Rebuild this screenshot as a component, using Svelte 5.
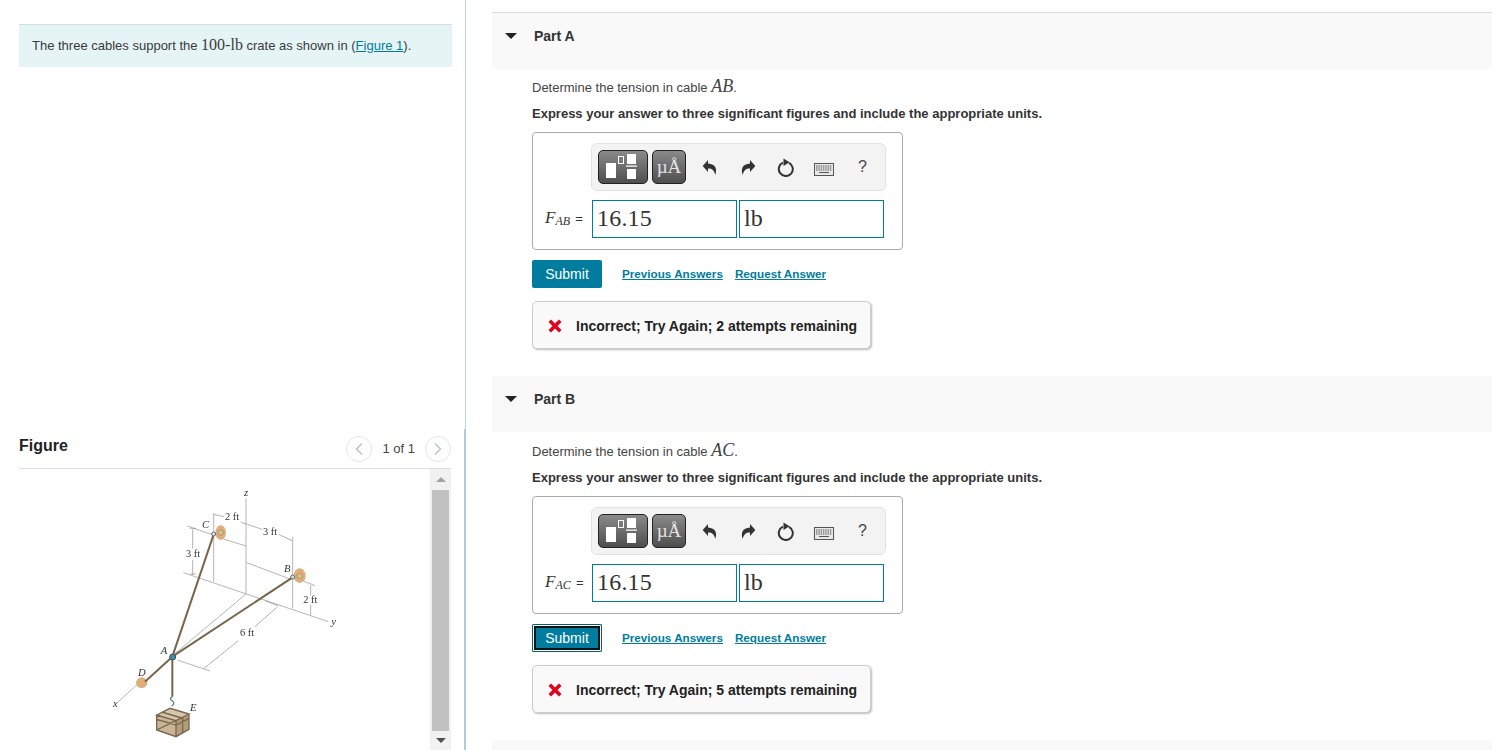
<script>
	const parts = [
		{ name: 'Part A', cable: 'AB', sub: 'AB', attempts: 2, focused: false },
		{ name: 'Part B', cable: 'AC', sub: 'AC', attempts: 5, focused: true }
	];
</script>

<div class="page">
	<div class="left">
		<div class="intro-wrap">
			<div class="intro">
				The three cables support the <span class="serif">100-lb</span> crate as shown in (<a href="#fig">Figure 1</a>).
			</div>
		</div>

		<div class="figure-wrap">
			<div class="figure-head">
				<h2>Figure</h2>
				<div class="pager">
					<span class="circle">
						<svg width="10" height="14" viewBox="0 0 10 14"><path d="M8 1.500 2.500 7 8 12.500" /></svg>
					</span>
					<span class="count">1 of 1</span>
					<span class="circle">
						<svg width="10" height="14" viewBox="0 0 10 14"><path d="M2 1.500 7.500 7 2 12.500" /></svg>
					</span>
				</div>
			</div>
			<div class="figure-body">
				<div class="figure-pic">
					<svg class="diagram" width="270" height="270" viewBox="0 0 810 810">
						<g class="thin">
							<path d="M468 55V340" />
							<path d="M280 278 715 425" />
							<path d="M468 342 250 525" />
							<path d="M85 665 140 615" />
							<path d="M292 138 370 165M400 177 468 198" />
							<path d="M371 100V305" />
							<path d="M470 248 600 297" />
							<path d="M608 170V385" />
							<path d="M640 303 675 317" />
							<path d="M262 540 360 573" />
							<path d="M525 362 565 378" />
						</g>
						<g class="dim">
							<path d="M308 148V205M308 240V285" />
							<path d="M300 282H318M300 145H318" />
							<path d="M371 103 402 110M452 126 468 132" />
							<path d="M470 132 516 148M566 163 606 182" />
							<path d="M662 316V345M662 375V405" />
							<path d="M342 565 445 482M495 440 560 382" />
						</g>
						<g class="mount">
							<ellipse cx="392" cy="158" rx="16" ry="22" />
							<ellipse cx="629" cy="287" rx="18" ry="22" />
							<ellipse cx="155" cy="608" rx="17" ry="16" />
						</g>
						<g class="mount-in">
							<circle cx="392" cy="158" r="8" />
							<circle cx="629" cy="288" r="8" />
						</g>
						<g class="cable">
							<path d="M247 530 371 163" />
							<path d="M247 530 608 292" />
							<path d="M247 530 165 605" />
							<path d="M247 530V650" />
						</g>
						<circle class="ring" cx="371" cy="162" r="6" />
						<circle class="ring" cx="608" cy="291" r="6" />
						<circle class="knot" cx="248" cy="531" r="9" />
						<path class="hook" d="M247 650c-8 4-6 10 0 13s6 10-2 16" />
						<g class="crate">
							<path class="side" d="M200 705 258 722V770L200 750Z" />
							<path class="side dark" d="M258 722 297 702V748L258 770Z" />
							<path class="side light" d="M200 705 240 685 297 702 258 722Z" />
							<path class="frame" d="M200 705 258 722 297 702 240 685ZM200 705V750L258 770 297 748V702M258 722V770M200 718 258 735 297 715M200 750 258 722M278 712V758M215 696 275 714" />
						</g>
						<g class="dim-label">
							<text x="405" y="121">2 ft</text>
							<text x="519" y="165">3 ft</text>
							<text x="288" y="232">3 ft</text>
							<text x="640" y="369">2 ft</text>
							<text x="450" y="468">6 ft</text>
						</g>
						<g class="point-label">
							<text x="462" y="49">z</text>
							<text x="336" y="144">C</text>
							<text x="582" y="277">B</text>
							<text x="212" y="522">A</text>
							<text x="144" y="587">D</text>
							<text x="300" y="692">E</text>
							<text x="69" y="680">x</text>
							<text x="724" y="434">y</text>
						</g>
					</svg>
				</div>
				<div class="scrollbar">
					<div class="arrow"><span class="up"></span></div>
					<div class="thumb"></div>
					<div class="arrow bottom"><span class="down"></span></div>
				</div>
			</div>
		</div>
	</div>

	<div class="right">
		{#each parts as part, i}
			<section class="part">
				<div class="part-head" class:first={i === 0}>
					<span class="caret"></span>
					<h3>{part.name}</h3>
				</div>
				<p class="question">Determine the tension in cable <span class="math">{part.cable}</span>.</p>
				<p class="express">Express your answer to three significant figures and include the appropriate units.</p>

				<div class="answer">
					<div class="toolbar">
						<button class="tool template" aria-label="Templates">
							<svg width="48" height="32" viewBox="0 0 48 32">
								<path class="white" d="M7 12h10v15H7zM28 3h9v10h-9zM27 14.500h11v1.200H27zM28 18h9v10h-9z" />
								<rect class="hollow" x="19.500" y="5.500" width="5" height="7" />
							</svg>
						</button>
						<button class="tool units">µÅ</button>
						<svg class="icon undo" width="16" height="17" viewBox="0 0 16 17">
							<path d="M6 1 .7 7 6 13V9.500c3.700-.2 6 1.500 7.300 6.500 2-6 .5-11-7.300-11.500z" />
						</svg>
						<svg class="icon redo" width="16" height="17" viewBox="0 0 16 17">
							<path d="M10 1l5.300 6L10 13V9.500c-3.700-.2-6 1.500-7.300 6.500-2-6-.5-11 7.300-11.500z" />
						</svg>
						<svg class="icon reset" width="18" height="19" viewBox="0 0 18 19">
							<path class="ring-line" d="M12 4.800A7 7 0 1 1 6 4.600" />
							<path d="M6.500.5 12.500 4.300 6.500 8z" />
						</svg>
						<svg class="icon keys" width="20" height="13" viewBox="0 0 20 13">
							<rect x=".5" y=".5" width="19" height="12" />
							<path d="M2 3h16M2 5h16M2 7h16" stroke-dasharray="1.500 .8" />
							<path d="M5 9.500h10" />
						</svg>
						<span class="help">?</span>
					</div>

					<div class="entry">
						<span class="label"><i>F</i><i class="sub">{part.sub}</i> <span class="eq">=</span></span>
						<input class="field" value="16.15" />
						<input class="field" value="lb" />
					</div>
				</div>

				<div class="actions">
					<button class="submit" class:focused={part.focused}>Submit</button>
					<a href="#prev">Previous Answers</a>
					<a href="#req">Request Answer</a>
				</div>

				<div class="feedback">
					<svg width="14" height="14" viewBox="0 0 14 14">
						<path d="M3 .5 7 4.500 11 .5 13.500 3 9.500 7 13.500 11 11 13.500 7 9.500 3 13.500 .5 11 4.500 7 .5 3z" />
					</svg>
					<span>Incorrect; Try Again; {part.attempts} attempts remaining</span>
				</div>
			</section>
		{/each}
		<div class="part-head next"></div>
	</div>
</div>

<style>
	:global(body) {
		margin: 0;
		overflow: hidden;
		background: #fff;
	}

	.page {
		display: flex;
		height: 750px;
		overflow: hidden;
		font-family: 'Liberation Sans', Arial, sans-serif;
		font-size: 13px;
		color: #333;
	}

	.left {
		width: 467px;
		flex: none;
	}

	.intro-wrap {
		height: 429px;
		box-sizing: border-box;
		padding: 24px 13px 0 19px;
		width: 466px;
		border-right: 1px solid #c3d2e0;
	}

	.intro {
		height: 43px;
		box-sizing: border-box;
		padding-left: 13px;
		border-top: 1px solid #d5dfe3;
		background: #e5f5f6;
		font-size: 13px;
		line-height: 39px;
		color: #3a3a3a;
	}

	.serif {
		font-family: 'Liberation Serif', serif;
		font-size: 16px;
	}

	a {
		color: #007c9e;
		text-decoration: underline;
	}

	.figure-wrap {
		height: 321px;
		width: 466px;
		box-sizing: border-box;
		padding-left: 19px;
		border-right: 2px solid #b5c9dd;
	}

	.figure-head {
		display: flex;
		align-items: center;
		justify-content: space-between;
		width: 432px;
		height: 39px;
		border-bottom: 1px solid #ddd;
	}

	h2 {
		margin: 0 0 6px;
		font-size: 16px;
		font-weight: 700;
		color: #222;
	}

	.pager {
		display: flex;
		align-items: center;
	}

	.circle {
		display: flex;
		align-items: center;
		justify-content: center;
		width: 24px;
		height: 24px;
		border: 1px solid #e6e6e6;
		border-radius: 50%;
	}

	.circle path {
		fill: none;
		stroke: #b9c4cc;
		stroke-width: 1.500;
	}

	.count {
		margin: 0 10px;
		font-size: 13px;
		color: #444;
	}

	.figure-body {
		display: flex;
		width: 432px;
		height: 281px;
	}

	.figure-pic {
		flex: 1;
		padding: 11px 0 0 71px;
		overflow: hidden;
	}

	.diagram {
		display: block;
		filter: blur(0.3px);
	}

	.thin path {
		fill: none;
		stroke: #8f8f8f;
		stroke-width: 2;
	}

	.dim path {
		fill: none;
		stroke: #666;
		stroke-width: 1.500;
	}

	.mount {
		fill: #dfae7e;
	}

	.mount-in {
		fill: #d8c58c;
		stroke: #9a7f4c;
		stroke-width: 2;
	}

	.cable path {
		fill: none;
		stroke: #77664c;
		stroke-width: 6;
	}

	.ring {
		fill: #dfe5e5;
		stroke: #5f6a6a;
		stroke-width: 3;
	}

	.knot {
		fill: #3f8fb5;
		stroke: #3d4f55;
		stroke-width: 3;
	}

	.hook {
		fill: none;
		stroke: #5f7c7c;
		stroke-width: 4;
	}

	.side {
		fill: #c9b596;
	}

	.side.dark {
		fill: #b39d7c;
	}

	.side.light {
		fill: #d6c6ac;
	}

	.frame {
		fill: none;
		stroke: #7a674c;
		stroke-width: 4;
	}

	.dim-label text {
		font-family: 'Liberation Serif', serif;
		font-size: 31px;
		fill: #333;
	}

	.point-label text {
		font-family: 'Liberation Serif', serif;
		font-style: italic;
		font-size: 32px;
		fill: #333;
	}

	.scrollbar {
		display: flex;
		flex-direction: column;
		width: 21px;
		flex: none;
		background: #f1f1f1;
	}

	.arrow {
		display: flex;
		align-items: center;
		justify-content: center;
		height: 21px;
		flex: none;
	}

	.arrow.bottom {
		height: 19px;
	}

	.thumb {
		flex: 1;
		margin: 0 2px;
		background: #c1c1c1;
	}

	.up {
		border: 5px solid transparent;
		border-top: 0;
		border-bottom: 5px solid #a3a3a3;
	}

	.down {
		border: 5px solid transparent;
		border-bottom: 0;
		border-top: 5px solid #505050;
	}

	.right {
		flex: 1;
		padding: 12px 10px 0 25px;
	}

	.part {
		height: 364px;
		box-sizing: border-box;
	}

	.part-head {
		display: flex;
		align-items: center;
		height: 56px;
		box-sizing: border-box;
		padding: 0 0 11px 13px;
		background: #f9f9f9;
	}

	.part-head.first {
		height: 57px;
		margin-bottom: -1px;
		border-top: 1px solid #ddd;
	}

	.caret {
		border: 6px solid transparent;
		border-bottom: 0;
		border-top: 6px solid #222;
	}

	h3 {
		margin: 0 0 0 17px;
		font-size: 14px;
		font-weight: 700;
		color: #333;
	}

	.question {
		height: 20px;
		margin: 9px 0 0 40px;
		line-height: 20px;
		font-size: 13px;
		color: #444;
	}

	.math {
		font-family: 'Liberation Serif', serif;
		font-style: italic;
		font-size: 18px;
		line-height: 1;
	}

	.express {
		margin: 7px 0 0 40px;
		line-height: 20px;
		font-size: 13px;
		font-weight: 700;
		color: #333;
	}

	.answer {
		width: 371px;
		height: 118px;
		box-sizing: border-box;
		margin: 8px 0 0 40px;
		padding-top: 10px;
		border: 1px solid #aaa;
		border-radius: 4px;
	}

	.toolbar {
		display: flex;
		align-items: center;
		width: 295px;
		height: 48px;
		box-sizing: border-box;
		margin-left: 58px;
		padding-left: 6px;
		border: 1px solid #e3e3e3;
		border-radius: 6px;
		background: #f3f3f3;
	}

	.tool {
		height: 34px;
		box-sizing: border-box;
		padding: 0;
		border: 1px solid #222;
		border-radius: 5px;
		background: linear-gradient(#8a8a8a, #4e4e4e);
	}

	.template {
		width: 50px;
	}

	.template svg {
		display: block;
	}

	.white {
		fill: #fff;
	}

	.hollow {
		fill: none;
		stroke: #fff;
	}

	.units {
		width: 34px;
		margin-left: 4px;
		font-family: 'Liberation Serif', serif;
		font-size: 19px;
		color: #e4e4e4;
	}

	.icon {
		flex: none;
	}

	.icon path {
		fill: #333;
	}

	.undo {
		margin-left: 16px;
	}

	.redo {
		margin-left: 22px;
	}

	.reset {
		margin-left: 21px;
	}

	.reset .ring-line {
		fill: none;
		stroke: #333;
		stroke-width: 2;
	}

	.keys {
		margin-left: 19px;
		margin-top: 4px;
	}

	.keys rect {
		fill: #e8e8e8;
		stroke: #555;
	}

	.keys path {
		fill: none;
		stroke: #555;
	}

	.help {
		margin-left: 24px;
		font-size: 16px;
		color: #444;
	}

	.entry {
		display: flex;
		align-items: center;
		height: 38px;
		margin-top: 9px;
		padding-left: 12px;
	}

	.label {
		width: 47px;
		flex: none;
		margin-bottom: 3px;
		font-family: 'Liberation Serif', serif;
		font-size: 17px;
		white-space: nowrap;
		color: #333;
	}

	.sub {
		font-size: 12px;
		position: relative;
		top: 2px;
	}

	.eq {
		font-family: 'Liberation Sans', sans-serif;
		font-size: 13px;
		margin-left: 1px;
	}

	.field {
		width: 145px;
		height: 38px;
		box-sizing: border-box;
		margin-right: 2px;
		padding: 0 4px 2px 4px;
		border: 1px solid #007c9e;
		border-radius: 0;
		outline: none;
		font-family: 'Liberation Serif', serif;
		font-size: 24px;
		letter-spacing: 0.2px;
		color: #333;
	}

	.actions {
		display: flex;
		align-items: center;
		height: 28px;
		margin: 10px 0 0 40px;
		font-size: 11.700px;
		font-weight: 700;
	}

	.actions a {
		margin-bottom: 1px;
	}

	.actions a + a {
		margin-left: 12px;
	}

	.submit {
		width: 70px;
		height: 28px;
		margin-right: 20px;
		padding-bottom: 1px;
		border: none;
		border-radius: 2px;
		background: #007c9e;
		font-family: 'Liberation Sans', Arial, sans-serif;
		font-size: 14px;
		color: #fff;
	}

	.submit.focused {
		box-shadow:
			inset 0 0 0 1px #00607c,
			inset 0 0 0 2px #fff,
			inset 0 0 0 4px #111;
	}

	.feedback {
		display: flex;
		align-items: center;
		gap: 14px;
		width: 339px;
		height: 48px;
		box-sizing: border-box;
		margin: 13px 0 0 40px;
		padding: 1px 0 0 15px;
		border: 1px solid #ccc;
		border-radius: 5px;
		background: #f9f9f9;
		box-shadow: 1px 1px 2px #bbb;
		font-size: 14px;
		font-weight: 700;
		color: #222;
	}

	.feedback svg {
		flex: none;
	}

	.feedback path {
		fill: #e2001a;
	}
</style>
